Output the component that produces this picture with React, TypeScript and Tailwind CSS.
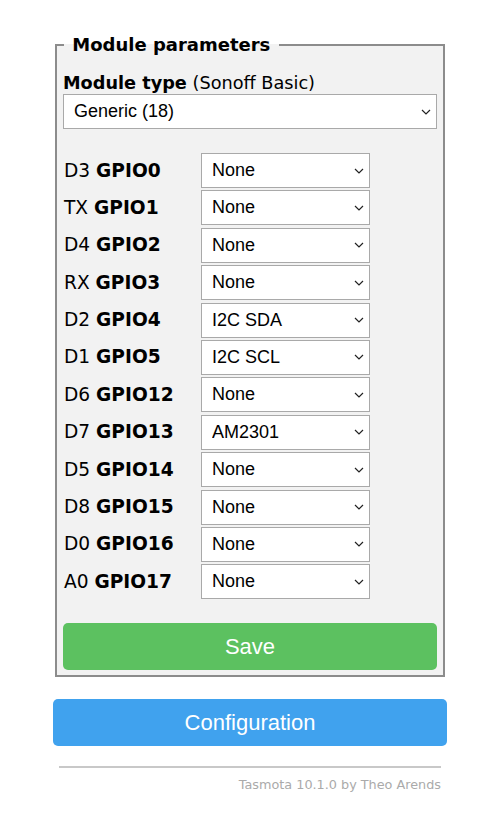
import React from "react"

const pins = [
  ["D3", "GPIO0", "None"],
  ["TX", "GPIO1", "None"],
  ["D4", "GPIO2", "None"],
  ["RX", "GPIO3", "None"],
  ["D2", "GPIO4", "I2C SDA"],
  ["D1", "GPIO5", "I2C SCL"],
  ["D6", "GPIO12", "None"],
  ["D7", "GPIO13", "AM2301"],
  ["D5", "GPIO14", "None"],
  ["D8", "GPIO15", "None"],
  ["D0", "GPIO16", "None"],
  ["A0", "GPIO17", "None"],
]

function Chevron() {
  return (
    <svg width="10" height="6" viewBox="0 0 10 6" className="pointer-events-none absolute right-[6px] top-1/2 -translate-y-1/2">
      <path d="M1 1 L5 5 L9 1" fill="none" stroke="#222" strokeWidth="1.2" />
    </svg>
  )
}

function Select({ value, className }: { value: string; className: string }) {
  return (
    <div className={`relative ${className}`}>
      <select
        defaultValue={value}
        className="h-full w-full appearance-none border border-[#a9a9a9] bg-white pl-[10px] text-[18px] text-black outline-none [font-family:'Liberation_Sans',Arial,sans-serif]"
      >
        <option>{value}</option>
      </select>
      <Chevron />
    </div>
  )
}

export default function App() {
  return (
    <div className="min-h-[823px] w-full bg-white pt-[34px] text-black [font-family:'DejaVu_Sans',Verdana,sans-serif]">
      <div className="mx-auto w-[394px]">
        <fieldset className="ml-[2px] w-[390px] border-2 border-[#8c8c8c] bg-[#f2f2f2] px-[6px] pb-[5px] pt-0">
          <legend className="ml-[1px] px-[2px] text-[18px] font-bold leading-[22px]">&nbsp;Module parameters&nbsp;</legend>

          {/* Module type */}
          <div className="mt-[17px] text-[17.7px] leading-[20px]">
            <b>Module type</b> (Sonoff Basic)
          </div>
          <Select value="Generic (18)" className="mt-[1px] h-[35px] w-full" />

          {/* GPIO table */}
          <div className="mt-[24px] flex flex-col gap-[2.4px]">
            {pins.map(([d, g, v]) => (
              <div key={g} className="flex items-center">
                <div className="w-[138px] pl-[1px] text-[18.6px] leading-[22px]">
                  {d} <b>{g}</b>
                </div>
                <Select value={v} className="h-[35px] w-[169px]" />
              </div>
            ))}
          </div>

          <button className="mt-[24px] h-[47px] w-full rounded-[5px] bg-[#5cc160] text-[22px] text-white [font-family:'Liberation_Sans',Arial,sans-serif]">
            Save
          </button>
        </fieldset>

        <button className="mt-[22px] h-[47px] w-full rounded-[5px] bg-[#40a2ee] text-[22px] text-white [font-family:'Liberation_Sans',Arial,sans-serif]">
          Configuration
        </button>

        <div className="mx-[6px] mt-[20px] border-t-2 border-[#c8c8c8]" />
        <div className="mr-[6px] mt-[7px] text-right text-[12.8px] text-[#aaa]">Tasmota 10.1.0 by Theo Arends</div>
      </div>
    </div>
  )
}
